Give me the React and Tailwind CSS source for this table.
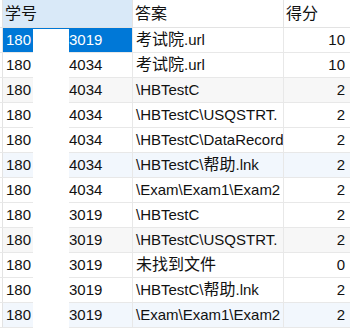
import React from "react";

const rows = [
  { id: "3019", answer: "考试院.url", score: 10, selected: true },
  { id: "4034", answer: "考试院.url", score: 10 },
  { id: "4034", answer: "\\HBTestC", score: 2, tint: "gray" },
  { id: "4034", answer: "\\HBTestC\\USQSTRT.", score: 2 },
  { id: "4034", answer: "\\HBTestC\\DataRecord", score: 2 },
  { id: "4034", answer: "\\HBTestC\\帮助.lnk", score: 2, tint: "blue" },
  { id: "4034", answer: "\\Exam\\Exam1\\Exam2", score: 2 },
  { id: "3019", answer: "\\HBTestC", score: 2 },
  { id: "3019", answer: "\\HBTestC\\USQSTRT.", score: 2, tint: "gray" },
  { id: "3019", answer: "未找到文件", score: 0 },
  { id: "3019", answer: "\\HBTestC\\帮助.lnk", score: 2 },
  { id: "3019", answer: "\\Exam\\Exam1\\Exam2", score: 2, tint: "blue" },
];

// chinese chars a bit bigger than the latin ones, like the original grid font
function Answer({ text }) {
  const parts = text.split(/([\u4e00-\u9fff]+)/).filter(Boolean);
  return parts.map((p, i) =>
    /[\u4e00-\u9fff]/.test(p) ? (
      <span key={i} className="text-[16px]">{p}</span>
    ) : (
      <span key={i}>{p}</span>
    )
  );
}

export default function App() {
  return (
    <div
      className="relative w-[350px] h-[332px] overflow-hidden bg-white text-[15px] text-[#111]"
      style={{ fontFamily: '"Liberation Sans", "Noto Sans CJK SC", sans-serif' }}
    >
      {/* header */}
      <div className="flex h-[28px] border-b border-[#e3e3e3] text-[16px]">
        <div className="w-[3px] shrink-0 border-r border-[#e3e3e3]" />
        <div className="w-[130px] shrink-0 flex items-center pl-[2px] bg-[#d9e9f8] border-r border-[#e3e3e3]">
          学号
        </div>
        <div className="w-[151px] shrink-0 flex items-center pl-[2px] border-r border-[#e3e3e3]">
          答案
        </div>
        <div className="flex-1 flex items-center pl-[2px]">得分</div>
      </div>

      {rows.map((r, i) => {
        const rowBg =
          r.tint === "gray" ? "bg-[#f7f7f7]" : r.tint === "blue" ? "bg-[#f2f7fd]" : "bg-white";
        return (
          <div key={i} className={`flex h-[25px] border-b border-[#e8e8e8] ${rowBg}`}>
            <div className="w-[3px] shrink-0 bg-white border-r border-[#e3e3e3]" />
            <div
              className={`w-[130px] shrink-0 flex items-center pl-[3px] border-r border-[#e8e8e8] whitespace-nowrap ${
                r.selected ? "bg-[#0078d7] text-white" : ""
              }`}
            >
              <span>180</span>
              <span className="w-[38px] shrink-0" />
              <span>{r.id}</span>
            </div>
            <div className="w-[151px] shrink-0 flex items-center pl-[3px] border-r border-[#e8e8e8] overflow-hidden whitespace-nowrap">
              <Answer text={r.answer} />
            </div>
            <div className="flex-1 flex items-center justify-end pr-[5px]">{r.score}</div>
          </div>
        );
      })}

      {/* redacted block */}
      <div className="absolute left-[33px] top-[29px] w-[36px] h-[303px] bg-white" />
    </div>
  );
}
